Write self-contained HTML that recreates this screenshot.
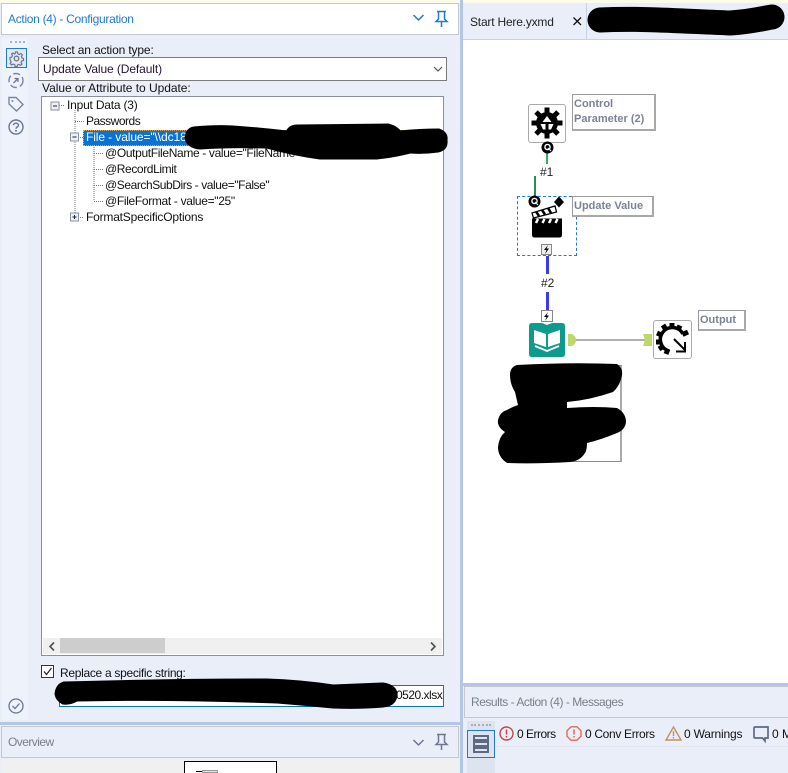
<!DOCTYPE html>
<html><head><meta charset="utf-8">
<style>
html,body{margin:0;padding:0;width:788px;height:773px;overflow:hidden;background:#e9eef9;font-family:"Liberation Sans",sans-serif;font-size:12px;color:#111}
.a{position:absolute;box-sizing:border-box}
.t{position:absolute;white-space:nowrap;line-height:16px}
svg{position:absolute;overflow:visible}
.lbl{position:absolute;box-sizing:border-box;background:#fff;border:1px solid #9a9a9a;border-right:2px solid #a8a8a8;border-bottom:2px solid #a8a8a8;color:#7b8296;font-weight:bold;font-size:11px;line-height:15px;padding:2px 1px;white-space:nowrap}
</style></head><body>
<div class="a" style="left:0;top:0;width:788px;height:3px;background:#fdfbe9"></div>
<!-- Left config panel -->
<div class="a" style="left:1px;top:3px;width:458px;height:32px;background:#fff;border:1px solid #c4c8cf"></div>
<div class="t" style="left:8px;top:11px;color:#1f7ad0;letter-spacing:-.3px">Action (4) - Configuration</div>
<svg style="left:412px;top:13px" width="14" height="10"><path d="M1.500 2L6.500 7L11.500 2" fill="none" stroke="#1f7ad0" stroke-width="1.500"/></svg>
<svg style="left:434px;top:10px" width="16" height="18"><path d="M3 1.500H12M4.500 1.500V9L2 11.500H13L10.500 9V1.500M7.500 11.500V17" fill="none" stroke="#1f7ad0" stroke-width="1.500"/></svg>
<!-- side rail -->
<div class="a" style="left:2px;top:38px;width:26px;height:682px;background:#eef2fb"></div>
<div class="a" style="left:10px;top:41px;width:15px;height:2px;border-top:2px dotted #a9afbd"></div>
<div class="a" style="left:6px;top:48px;width:21px;height:20px;border:1px solid #1f7ad0;background:#e2e9f6"></div>
<svg style="left:9px;top:51px" width="15" height="15" viewBox="0 0 15 15"><circle cx="7.500" cy="7.500" r="2.300" fill="none" stroke="#6b7690" stroke-width="1.300"/><path d="M6.500 1h2l.4 1.800 1.500.7 1.600-1 1.400 1.400-1 1.600.7 1.500 1.400.5v2l-1.800.4-.7 1.500 1 1.600-1.400 1.400-1.600-1-1.500.7-.4 1.400h-2l-.4-1.800-1.500-.7-1.600 1-1.400-1.400 1-1.600-.7-1.500L1 8.500v-2l1.800-.4.7-1.500-1-1.600L3.900 2l1.600 1 .7-.4z" fill="none" stroke="#6b7690" stroke-width="1.200"/></svg>
<svg style="left:8px;top:72px" width="16" height="17" viewBox="0 0 16 17"><circle cx="8" cy="8.500" r="7" fill="none" stroke="#7b85a0" stroke-width="1.400" stroke-dasharray="7 3"/><path d="M5.500 11L10 6.500M6.500 6.500H10V10" fill="none" stroke="#6b7690" stroke-width="1.300"/></svg>
<svg style="left:8px;top:96px" width="16" height="16" viewBox="0 0 16 16"><path d="M1 1.500H8L15 8.500L8.500 15L1 8Z" fill="none" stroke="#7b85a0" stroke-width="1.400"/><circle cx="4.500" cy="5" r="1" fill="#7b85a0"/></svg>
<svg style="left:8px;top:119px" width="16" height="16" viewBox="0 0 16 16"><circle cx="8" cy="8" r="7" fill="none" stroke="#6b7690" stroke-width="1.400"/><path d="M5.500 6.200C5.600 3.500 10.400 3.500 10.500 6.200C10.500 8 8 7.800 8 9.800" fill="none" stroke="#6b7690" stroke-width="1.400"/><circle cx="8" cy="11.800" r="1" fill="#6b7690"/></svg>
<svg style="left:8px;top:698px" width="16" height="16" viewBox="0 0 16 16"><circle cx="8" cy="8" r="7" fill="none" stroke="#6b7690" stroke-width="1.300"/><path d="M4.500 8L7 10.500L11.500 5.500" fill="none" stroke="#6b7690" stroke-width="1.300"/></svg>

<div class="t" style="left:42px;top:42px;letter-spacing:-.14px">Select an action type:</div>
<div class="a" style="left:38px;top:57px;width:409px;height:24px;background:#fff;border:1px solid #7a7a7a"></div>
<div class="t" style="left:43px;top:61px;color:#24123a;letter-spacing:-.1px">Update Value (Default)</div>
<svg style="left:433px;top:66px" width="10" height="7"><path d="M1 1L5 5L9 1" fill="none" stroke="#555" stroke-width="1.200"/></svg>
<div class="t" style="left:42px;top:80px;letter-spacing:-.04px">Value or Attribute to Update:</div>

<!-- Tree -->
<div class="a" style="left:41px;top:96px;width:403px;height:560px;background:#fff;border:1px solid #8a8f9a"></div>
<svg style="left:41px;top:96px" width="403" height="140" shape-rendering="crispEdges"><g fill="none" stroke="#777" stroke-dasharray="1 1"><path d="M34 14V122M18 9.500H24M34 25.500H43M53 45V105M53 57.500H62M53 73.500H62M53 89.500H62M53 105.500H62M39 121.500H43M39 41.500H43"/></g>
<g fill="#eef0f4" stroke="#8a92a4"><rect x="10" y="6" width="8" height="8"/><rect x="29.500" y="37" width="8" height="8"/><rect x="29.500" y="117" width="8" height="8"/></g>
<path d="M12 10H16M31.500 41H35.500M31.500 121H35.500M33.500 119V123" stroke="#223"/></svg>
<div class="t" style="left:67px;top:97px;letter-spacing:-.2px">Input Data (3)</div>
<div class="t" style="left:86px;top:113px;letter-spacing:-.5px">Passwords</div>
<div class="a" style="left:83px;top:130px;width:360px;height:16px;background:#0a72d2;outline:1px dotted #d9a860;outline-offset:-1px"></div>
<div class="t" style="left:86px;top:129px;color:#fff;letter-spacing:-.1px">File - value="\\dc18</div>
<div class="t" style="left:105px;top:145px;letter-spacing:-.35px">@OutputFileName - value="FileName</div>
<div class="t" style="left:105px;top:161px;letter-spacing:-.4px">@RecordLimit</div>
<div class="t" style="left:105px;top:177px;letter-spacing:-.43px">@SearchSubDirs - value="False"</div>
<div class="t" style="left:105px;top:193px;letter-spacing:-.33px">@FileFormat - value="25"</div>
<div class="t" style="left:86px;top:209px;letter-spacing:-.2px">FormatSpecificOptions</div>
<!-- scrollbar -->
<div class="a" style="left:43px;top:638px;width:399px;height:16px;background:#f0f0f0"></div>
<div class="a" style="left:60px;top:638px;width:105px;height:15px;background:#cdcdcd"></div>
<svg style="left:47px;top:641px" width="390" height="10"><path d="M7 1.500L3 5.500L7 9.500M384 1.500L388 5.500L384 9.500" fill="none" stroke="#505050" stroke-width="1.600"/></svg>

<div class="a" style="left:41px;top:665px;width:13px;height:13px;background:#fff;border:1px solid #333"></div>
<svg style="left:41px;top:665px" width="13" height="13"><path d="M3 6.500L5.500 9.500L10.500 3" fill="none" stroke="#222" stroke-width="1.200"/></svg>
<div class="a" style="left:59px;top:685px;width:385px;height:22px;background:#fff;border:1px solid #0a72d2"></div>
<div class="t" style="left:396px;top:687px;letter-spacing:-.5px">0520.xlsx</div>

<!-- Redactions left -->
<svg style="left:0;top:0" width="460" height="720"><g fill="#000" stroke="#000" stroke-width="3" stroke-linejoin="round">
<path d="M186 138Q187 129 194 128Q215 126 233 127Q262 129 287 132Q290 126 297 126L388 125Q396 127 400 132Q420 130 439 130Q447 133 446 140Q447 149 438 151Q424 153 410 152Q395 156 377 158L320 158Q292 154 267 147Q230 146 200 148Q188 147 186 138Z"/>
<path d="M56 694Q57 685 64 683Q170 680 267 680Q300 681 333 686Q360 685 383 684Q396 686 396 695Q395 705 383 706Q360 708 333 707Q302 704 277 702Q170 698 77 700Q70 704 63 703Q57 700 56 694Z"/></g></svg>
<div class="t" style="left:60px;top:665px;letter-spacing:-.3px">Replace a specific string:</div>

<!-- splitters -->
<div class="a" style="left:0;top:722px;width:460px;height:3px;background:#b4c6e7"></div>
<div class="a" style="left:460px;top:0;width:3px;height:773px;background:#b4c6e7"></div>

<!-- Overview -->
<div class="a" style="left:1px;top:726px;width:458px;height:32px;border:1px solid #c4c8cf;background:#e9eef9"></div>
<div class="t" style="left:8px;top:734px;color:#7a7f8a;letter-spacing:-.55px">Overview</div>
<svg style="left:412px;top:738px" width="14" height="10"><path d="M1.500 2L6.500 7L11.500 2" fill="none" stroke="#6f7890" stroke-width="1.500"/></svg>
<svg style="left:434px;top:733px" width="16" height="18"><path d="M3 1.500H12M4.500 1.500V9L2 11.500H13L10.500 9V1.500M7.500 11.500V17" fill="none" stroke="#6f7890" stroke-width="1.500"/></svg>
<div class="a" style="left:2px;top:759px;width:456px;height:14px;background:#f0f0f0"></div>
<div class="a" style="left:184px;top:761px;width:93px;height:12px;background:#fff;border:1px solid #000;border-bottom:0"></div>
<div class="a" style="left:196px;top:771px;width:6px;height:1px;background:#000"></div>
<div class="a" style="left:202px;top:770px;width:16px;height:3px;background:#dfe3ea;border:1px solid #999"></div>

<!-- Tabs -->
<div class="a" style="left:463px;top:3px;width:325px;height:37px;background:#e9eef9;border-bottom:1px solid #c6d2e6"></div>
<div class="a" style="left:586px;top:3px;width:1px;height:37px;background:#c6d2e6"></div>
<div class="t" style="left:470px;top:14px;color:#222;letter-spacing:-.2px">Start Here.yxmd</div>
<svg style="left:573px;top:17px" width="9" height="9"><path d="M.5 .5L8 8M8 .5L.5 8" stroke="#111" stroke-width="1.300"/></svg>
<svg style="left:580px;top:0" width="208" height="40"><path d="M20 20C60 18 100 21 150 23C170 22 185 18 192 17" fill="none" stroke="#000" stroke-width="25" stroke-linecap="round"/></svg>

<!-- Canvas -->
<div class="a" style="left:463px;top:40px;width:325px;height:643px;background:#fff"></div>

<!-- connectors -->
<div class="a" style="left:546px;top:153px;width:2px;height:11px;background:#3aa76d"></div>
<div class="a" style="left:534px;top:176px;width:2px;height:21px;background:#2e8b57"></div>
<div class="t" style="left:540px;top:164px;color:#222">#1</div>
<div class="a" style="left:546px;top:256px;width:3px;height:18px;background:#3b3be8"></div>
<div class="t" style="left:541px;top:275px;color:#222">#2</div>
<div class="a" style="left:546px;top:292px;width:3px;height:20px;background:#3b3be8"></div>
<div class="a" style="left:575px;top:339px;width:70px;height:2px;background:#b0b0b0"></div>

<!-- Control Param tool -->
<div class="a" style="left:528px;top:104px;width:38px;height:39px;background:#fff;border:1px solid #aaa;border-radius:3px"></div>
<svg style="left:530px;top:106px" width="34" height="34" viewBox="0 0 34 34"><circle cx="17" cy="17" r="11" fill="#000"/><g stroke="#000" stroke-width="5"><path d="M17 1.500V7M17 27V32.500M1.500 17H7M27 17H32.500M6 6L10 10M24 24L28 28M28 6L24 10M10 24L6 28"/></g><path d="M17 10L21.500 16H12.500ZM10.500 18H15.500V23.500H13ZM18.500 18H23.500L21 23.500H18.500Z" fill="#fff"/></svg>
<svg style="left:541px;top:141px" width="13" height="13"><circle cx="6.500" cy="6.500" r="6" fill="#000"/><circle cx="6.500" cy="6" r="2.600" fill="none" stroke="#fff" stroke-width="1.400"/><path d="M7 7L10 10" stroke="#cfe6ff" stroke-width="1.200"/></svg>
<div class="lbl" style="left:572px;top:94px;width:84px;height:37px">Control<br>Parameter (2)</div>

<!-- Update Value tool -->
<div class="a" style="left:517px;top:196px;width:60px;height:60px;border:1px dashed #1f7ad0"></div>
<svg style="left:528px;top:195px" width="13" height="13"><circle cx="6.500" cy="6.500" r="6" fill="#000"/><circle cx="6.500" cy="6" r="2.600" fill="none" stroke="#fff" stroke-width="1.400"/><path d="M7 7L10 10" stroke="#cfe6ff" stroke-width="1.200"/></svg>
<svg style="left:553px;top:196px" width="12" height="12"><path d="M6 .5L11 6L6 11.500L1 6Z" fill="#000"/></svg>
<svg style="left:530px;top:204px" width="34" height="36" viewBox="0 0 34 36"><path d="M2 9L25 2L26.500 8L3.500 14Z" fill="#fff" stroke="#000" stroke-width="1.300"/><path d="M6 7.500L9 12M12 6L15 10.500M18 4L21 9" stroke="#000" stroke-width="2.500"/><path d="M2 14.500H32V31Q32 33.500 29.500 33.500H4.500Q2 33.500 2 31Z" fill="#000"/><path d="M8 15L6 19M14.500 15L12.500 19M21 15L19 19M27.500 15L25.500 19" stroke="#fff" stroke-width="2.500"/></svg>
<div class="lbl" style="left:572px;top:196px;width:82px;height:21px">Update Value</div>
<div class="a" style="left:541px;top:244px;width:11px;height:11px;background:#eee;border:1px solid #888"></div>
<svg style="left:542px;top:245px" width="9" height="9"><path d="M6 0L2 5H4.500L3 9L7 3.500H4.500Z" fill="#000"/></svg>

<!-- Input -->
<div class="a" style="left:541px;top:310px;width:12px;height:12px;background:#fff;border:1px solid #888"></div>
<svg style="left:542px;top:312px" width="9" height="9"><path d="M6 0L2 5H4.500L3 9L7 3.500H4.500Z" fill="#000"/></svg>
<svg style="left:528px;top:322px" width="38" height="36" viewBox="0 0 38 36"><path d="M4 1H14L19 3L24 1H34Q37 1 37 4V32Q37 35 34 35H4Q1 35 1 32V4Q1 1 4 1Z" fill="#0d9b8d"/><path d="M6 8L18 12V25L6 21ZM32 8L20 12V25L32 21Z" fill="#fff"/><path d="M7 24L19 29L31 24" fill="none" stroke="#fff" stroke-width="1.800"/></svg>
<svg style="left:568px;top:334px" width="9" height="12"><path d="M0 0H4Q8 2 8 6Q8 10 4 12H0Z" fill="#bcd968"/></svg>
<svg style="left:643px;top:334px" width="10" height="12"><path d="M0 0H9V12H0L2 6Z" fill="#bcd968"/></svg>

<!-- Output tool -->
<div class="a" style="left:653px;top:320px;width:39px;height:39px;background:#fff;border:1px solid #aaa;border-radius:3px"></div>
<svg style="left:655px;top:322px" width="35" height="35" viewBox="0 0 35 35"><path d="M28 12A12 12 0 1 0 14 29" fill="none" stroke="#000" stroke-width="3.500"/><g stroke="#000" stroke-width="5"><path d="M17 1V6M8 3L10.500 7M2 11L6.500 13M1 20H6M4 27L8 24.500M11 32L13 27M25 3.500L23 8M33 10L27.500 12.500"/></g><path d="M19 17L30 28M30 20V29.500H21" fill="none" stroke="#000" stroke-width="2"/></svg>
<div class="lbl" style="left:698px;top:310px;width:48px;height:21px">Output</div>

<!-- Browse box -->
<div class="a" style="left:518px;top:365px;width:104px;height:97px;background:#fff;border:1px solid #8a8a8a;border-right:2px solid #aaa"></div>
<svg style="left:0;top:0" width="788" height="773"><path d="M510 375Q510 367 517 365Q570 362 617 364Q623 368 622 375Q620 386 613 392Q590 400 567 402L567 408Q595 406 617 408Q626 413 626 422Q625 430 617 433Q600 440 587 443Q587 450 585 453Q580 461 570 462Q535 464 507 463Q498 457 498 447Q499 437 505 432Q497 427 498 420Q500 412 507 410Q512 407 518 405L515 392Q510 384 510 375Z" fill="#000"/></svg>

<!-- Results -->
<div class="a" style="left:463px;top:683px;width:325px;height:3px;background:#b4c6e7"></div>
<div class="a" style="left:464px;top:686px;width:324px;height:32px;border:1px solid #c6c8cc;border-right:0;background:#e9eef9"></div>
<div class="t" style="left:471px;top:694px;color:#7a7f8a;letter-spacing:-.47px">Results - Action (4) - Messages</div>
<div class="a" style="left:467px;top:721px;width:28px;height:52px;background:#dde4f0"></div>
<div class="a" style="left:471px;top:724px;width:20px;height:2px;border-top:2px dotted #a9afbd"></div>
<div class="a" style="left:467px;top:730px;width:28px;height:28px;border:1px solid #1f7ad0"></div>
<svg style="left:473px;top:735px" width="16" height="18" shape-rendering="crispEdges"><g fill="none" stroke="#5d6a86" stroke-width="2"><rect x="1" y="1" width="14" height="4"/><rect x="1" y="7" width="14" height="4"/><rect x="1" y="13" width="14" height="4"/></g></svg>
<div class="a" style="left:495px;top:746px;width:293px;height:1px;background:#dfe4ef"></div>
<svg style="left:499px;top:726px" width="15" height="15"><circle cx="7.500" cy="7.500" r="6.500" fill="none" stroke="#c8434c" stroke-width="1.400"/><path d="M7.500 3.500V8.500M7.500 10V11.500" stroke="#c8434c" stroke-width="1.500"/></svg>
<div class="t" style="left:517px;top:726px;letter-spacing:-.5px">0 Errors</div>
<svg style="left:566px;top:726px" width="16" height="15"><path d="M5 .8H11L15 4.800V10.200L11 14.200H5L1 10.200V4.800Z" fill="none" stroke="#e06a55" stroke-width="1.400"/><path d="M8 3.500V8.500M8 10V11.500" stroke="#e06a55" stroke-width="1.500"/></svg>
<div class="t" style="left:585px;top:726px;letter-spacing:-.33px">0 Conv Errors</div>
<svg style="left:665px;top:726px" width="17" height="15"><path d="M8.500 1L16 14H1Z" fill="none" stroke="#c29260" stroke-width="1.400"/><path d="M8.500 5V10M8.500 11V12.500" stroke="#c29260" stroke-width="1.400"/></svg>
<div class="t" style="left:684px;top:726px;letter-spacing:-.2px">0 Warnings</div>
<svg style="left:753px;top:726px" width="16" height="16"><path d="M2 1H15V12H12V15L9.500 12H2Q1 12 1 11V2Q1 1 2 1Z" fill="none" stroke="#5d6a86" stroke-width="1.700"/></svg>
<div class="t" style="left:772px;top:726px">0 M</div>
</body></html>
